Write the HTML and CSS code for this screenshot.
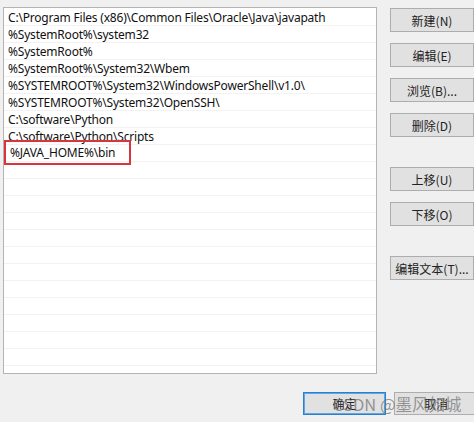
FILE: index.html
```html
<!DOCTYPE html>
<html lang="zh-CN">
<head>
    <meta charset="UTF-8">
    <title>编辑环境变量</title>
    <link rel="stylesheet" href="styles.css">
</head>
<body>

<div class="dialog">
    <div class="main">
        <!-- Path entries -->
        <div class="list">
            <div class="row">C:\Program Files (x86)\Common Files\Oracle\Java\javapath</div>
            <div class="row">%SystemRoot%\system32</div>
            <div class="row">%SystemRoot%</div>
            <div class="row">%SystemRoot%\System32\Wbem</div>
            <div class="row">%SYSTEMROOT%\System32\WindowsPowerShell\v1.0\</div>
            <div class="row">%SYSTEMROOT%\System32\OpenSSH\</div>
            <div class="row">C:\software\Python</div>
            <div class="row">C:\software\Python\Scripts</div>
            <div class="row"><span class="editing">%JAVA_HOME%\bin</span></div>
            <div class="row"></div>
            <div class="row"></div>
            <div class="row"></div>
            <div class="row"></div>
            <div class="row"></div>
            <div class="row"></div>
            <div class="row"></div>
            <div class="row"></div>
            <div class="row"></div>
            <div class="row"></div>
            <div class="row"></div>
            <div class="row"></div>
        </div>

        <!-- Side buttons -->
        <div class="side">
            <button class="btn">新建(N)</button>
            <button class="btn">编辑(E)</button>
            <button class="btn">浏览(B)...</button>
            <button class="btn">删除(D)</button>
            <button class="btn gap">上移(U)</button>
            <button class="btn">下移(O)</button>
            <button class="btn gap">编辑文本(T)...</button>
        </div>
    </div>

    <div class="actions">
        <button class="btn ok">确定</button>
        <button class="btn cancel">取消</button>
        <span class="mark">CSDN @墨风如城</span>
    </div>
</div>

</body>
</html>
```

FILE: styles.css
```css
body {
    margin: 0;
    background-color: #f0f0f0;
    font-family: 'Noto Sans', 'Noto Sans CJK SC', sans-serif;
    font-size: 12px;
    color: #111;
}
.dialog {
    width: 474px;
    height: 422px;
    overflow: hidden;
}
.main {
    display: flex;
    padding: 7px 0 0 3px;
}
.list {
    width: 375px;
    height: 364px;
    padding-top: 1px;
    background-color: #fff;
    border: 1px solid #b4b4b4;
    overflow: hidden;
}
.row {
    height: 16px;
    line-height: 18px;
    padding-left: 4px;
    border-bottom: 1px solid #f2f2f2;
    white-space: nowrap;
    letter-spacing: -0.2px;
}
/* entry being edited in place */
.editing {
    display: inline-block;
    position: relative;
    top: -5px;
    vertical-align: top;
    margin-left: -4px;
    padding: 2px 14px 2px 4px;
    line-height: 17px;
    border: 2px solid #d8353c;
}
.side {
    display: flex;
    flex-direction: column;
    padding-left: 13px;
    padding-top: 1px;
}
.btn {
    width: 84px;
    height: 24px;
    margin-bottom: 11px;
    padding: 0;
    background-color: #e1e1e1;
    border: 1px solid #adadad;
    font-family: 'Noto Sans CJK SC', sans-serif;
    font-size: 12px;
    color: #222;
}
.btn.gap {
    margin-top: 19px;
}
.actions {
    position: relative;
    display: flex;
    justify-content: flex-end;
    gap: 8px;
    padding-top: 18px;
    margin-right: -4px;
}
.btn.ok {
    width: 83px;
    height: 23px;
    border: 1px solid #2a7fd0;
    box-shadow: inset 0 0 0 1px #5ea6e6;
}
.btn.cancel {
    width: 84px;
    height: 23px;
}
.mark {
    position: absolute;
    left: 333px;
    top: 18px;
    font-family: 'Noto Sans CJK SC', sans-serif;
    font-size: 16.5px;
    color: rgba(120, 120, 120, 0.75);
    pointer-events: none;
}
```
